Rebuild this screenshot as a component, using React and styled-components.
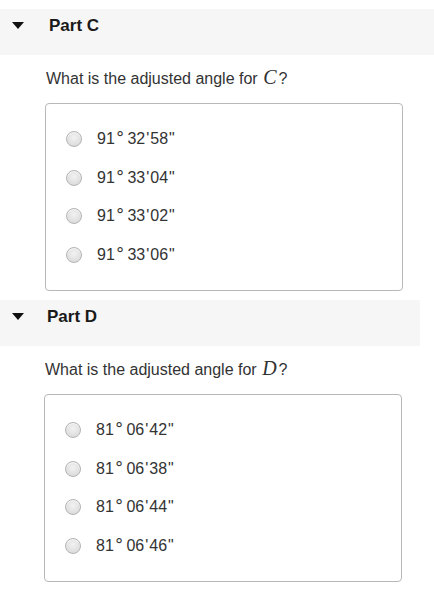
import React from "react";
import styled, { createGlobalStyle } from "styled-components";

const Global = createGlobalStyle`
  html, body { margin: 0; padding: 0; background: #ffffff; }
  body { font-family: "Liberation Sans", Arial, sans-serif; color: #333333; }
`;

const Page = styled.div`
  width: 434px;
  padding-top: 9px;
  display: flex;
  flex-direction: column;
`;

const Section = styled.section`
  display: flex;
  flex-direction: column;
  & + & { margin-top: 9px; }
`;

const Header = styled.div`
  width: ${(p) => p.$width}px;
  height: 46px;
  box-sizing: border-box;
  background: #f6f6f6;
  display: flex;
  align-items: flex-start;
  padding-top: 7px;
`;

const Caret = styled.svg`
  width: 12px;
  height: 7px;
  margin-left: 12px;
  margin-top: 6px;
  flex: none;
`;

const Title = styled.h3`
  margin: 0 0 0 ${(p) => p.$gap}px;
  font-size: 17px;
  line-height: 20px;
  font-weight: bold;
  color: #1a1a1a;
`;

const Body = styled.div`
  padding-left: ${(p) => p.$indent}px;
  display: flex;
  flex-direction: column;
`;

const Question = styled.p`
  margin: 14px 0 14px 1px;
  height: 20px;
  font-size: 16px;
  line-height: 20px;
  color: #333333;
`;

const MathVar = styled.span`
  font-family: "Liberation Serif", "Times New Roman", serif;
  font-style: italic;
  font-size: 20px;
  line-height: 0;
  margin: 0 2px 0 1px;
`;

const ChoiceBox = styled.div`
  width: 358px;
  height: 188px;
  box-sizing: border-box;
  border: 1px solid #b8b8b8;
  border-radius: 4px;
  padding: 16px 0 16px 20px;
  display: flex;
  flex-direction: column;
`;

const Row = styled.label`
  height: 39px;
  display: flex;
  align-items: center;
`;

const Radio = styled.span`
  width: 16px;
  height: 16px;
  box-sizing: border-box;
  border-radius: 50%;
  border: 1px solid #b4b4b4;
  background: radial-gradient(circle at 50% 40%, #f2f2f2 0%, #e2e2e2 55%, #d4d4d4 100%);
  box-shadow: inset 0 1px 1px rgba(255,255,255,0.8);
  flex: none;
`;

const Label = styled.span`
  margin-left: 15px;
  font-size: 16px;
  line-height: 20px;
  color: #333333;
  display: inline-flex;
  align-items: baseline;
`;

const Degree = styled.span`
  font-family: "DejaVu Sans", sans-serif;
  font-size: 17px;
  line-height: 10px;
  position: relative;
  top: -5px;
  margin: 0 2px 0 0;
`;

const Prime = styled.span`
  margin: 0 ${(p) => p.$r}px 0 1px;
`;

function Angle({ deg, min, sec }) {
  return (
    <Label>
      {deg}
      <Degree>∘</Degree>
      {min}
      <Prime $r={1}>'</Prime>
      {sec}
      <Prime $r={0}>"</Prime>
    </Label>
  );
}

function Part({ name, variable, options, headerWidth, indent, gap }) {
  return (
    <Section>
      <Header $width={headerWidth}>
        <Caret viewBox="0 0 12 7">
          <path d="M0 0 L12 0 L6 7 Z" fill="#111" />
        </Caret>
        <Title $gap={gap}>Part {name}</Title>
      </Header>
      <Body $indent={indent}>
        <Question>
          What is the adjusted angle for <MathVar>{variable}</MathVar>?
        </Question>
        <ChoiceBox>
          {options.map((o, i) => (
            <Row key={i}>
              <Radio />
              <Angle {...o} />
            </Row>
          ))}
        </ChoiceBox>
      </Body>
    </Section>
  );
}

const partC = [
  { deg: "91", min: "32", sec: "58" },
  { deg: "91", min: "33", sec: "04" },
  { deg: "91", min: "33", sec: "02" },
  { deg: "91", min: "33", sec: "06" },
];

const partD = [
  { deg: "81", min: "06", sec: "42" },
  { deg: "81", min: "06", sec: "38" },
  { deg: "81", min: "06", sec: "44" },
  { deg: "81", min: "06", sec: "46" },
];

export default function App() {
  return (
    <>
      <Global />
      <Page>
        <Part name="C" variable="C" options={partC} headerWidth={434} indent={45} gap={25} />
        <Part name="D" variable="D" options={partD} headerWidth={420} indent={44} gap={23} />
      </Page>
    </>
  );
}
